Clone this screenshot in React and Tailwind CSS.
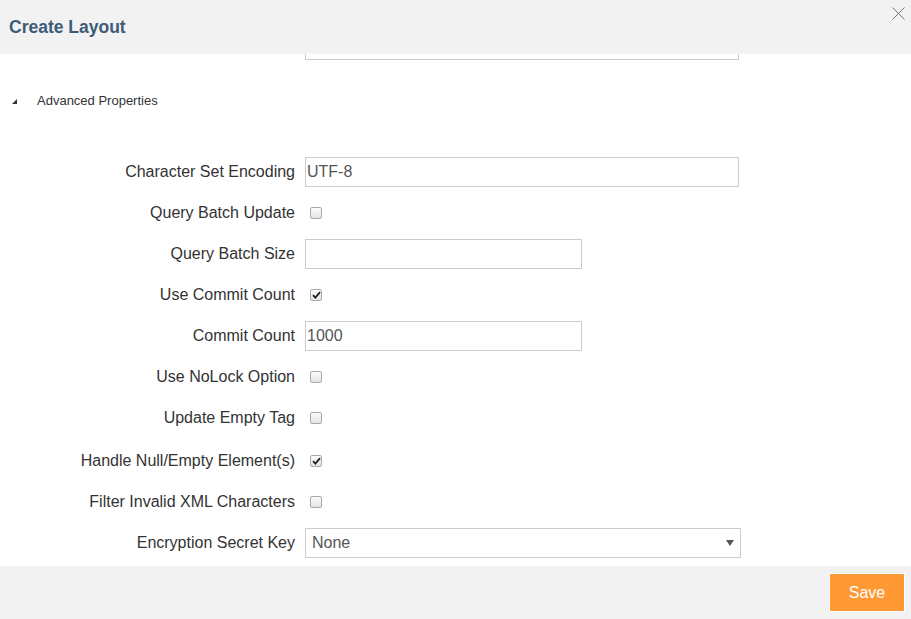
import React from "react";

function Check({ checked }) {
  return (
    <span className="inline-flex w-[12px] h-[12px] ml-[5px] items-center justify-center rounded-[2px] border border-[#a9a9a9] bg-gradient-to-b from-[#fbfbfb] to-[#e4e4e4]">
      {checked && (
        <svg width="9" height="8" viewBox="0 0 9 8">
          <path d="M1 4.2 L3.4 6.6 L8 1.2" fill="none" stroke="#222" strokeWidth="1.8" />
        </svg>
      )}
    </span>
  );
}

function Row({ label, children, extra = "" }) {
  return (
    <div className={"flex items-center h-[41px] " + extra}>
      <div className="w-[295px] text-right text-[16px] text-[#333]">{label}</div>
      <div className="ml-[10px] flex items-center">{children}</div>
    </div>
  );
}

function TextInput({ value, w }) {
  return (
    <div className={"h-[30px] border border-[#ccc] bg-white flex items-center pl-[1px] text-[16px] text-[#555] " + w}>
      {value}
    </div>
  );
}

export default function App() {
  return (
    <div className="w-[911px] h-[619px] bg-white flex flex-col overflow-hidden" style={{ fontFamily: '"Liberation Sans", Arial, sans-serif' }}>
      <div className="h-[54px] bg-[#f2f2f2] flex items-start justify-between shrink-0">
        <div className="pl-[9px] pt-[14px] text-[17.5px] font-bold text-[#3d5b77]">Create Layout</div>
        <svg className="mt-[7px] mr-[6px]" width="13" height="13" viewBox="0 0 13 13">
          <path d="M0.5 0.5 L12.5 12.5 M12.5 0.5 L0.5 12.5" stroke="#777" strokeWidth="1" />
        </svg>
      </div>
      <div className="flex-1 flex flex-col">
        <div className="ml-[305px] w-[434px] h-[6px] border-l border-r border-b border-[#ccc]" />
        <div className="flex items-center h-[20px] mt-[31px]">
          <svg className="ml-[11px]" width="7" height="7" viewBox="0 0 7 7">
            <path d="M6 1 L6 6 L1 6 Z" fill="#333" />
          </svg>
          <span className="ml-[19px] text-[13px] text-[#333]">Advanced Properties</span>
        </div>
        <div className="mt-[40px] flex flex-col">
          <Row label="Character Set Encoding"><TextInput value="UTF-8" w="w-[434px]" /></Row>
          <Row label="Query Batch Update"><Check /></Row>
          <Row label="Query Batch Size"><TextInput value="" w="w-[277px]" /></Row>
          <Row label="Use Commit Count"><Check checked /></Row>
          <Row label="Commit Count"><TextInput value="1000" w="w-[277px]" /></Row>
          <Row label="Use NoLock Option"><Check /></Row>
          <Row label="Update Empty Tag"><Check /></Row>
          <Row label="Handle Null/Empty Element(s)" extra="mt-[2px]"><Check checked /></Row>
          <Row label="Filter Invalid XML Characters"><Check /></Row>
          <Row label="Encryption Secret Key">
            <div className="w-[436px] h-[30px] border border-[#ccc] bg-white flex items-center justify-between pl-[6px] pr-[6px] text-[16px] text-[#555]">
              <span>None</span>
              <svg width="8" height="6" viewBox="0 0 8 6"><path d="M0 0 L8 0 L4 6 Z" fill="#555" /></svg>
            </div>
          </Row>
        </div>
      </div>
      <div className="h-[53px] bg-[#f2f2f2] flex items-center justify-end shrink-0 pr-[6px]">
        <button className="w-[76px] h-[39px] bg-[#ff9933] border border-white text-white text-[16px]">Save</button>
      </div>
    </div>
  );
}
